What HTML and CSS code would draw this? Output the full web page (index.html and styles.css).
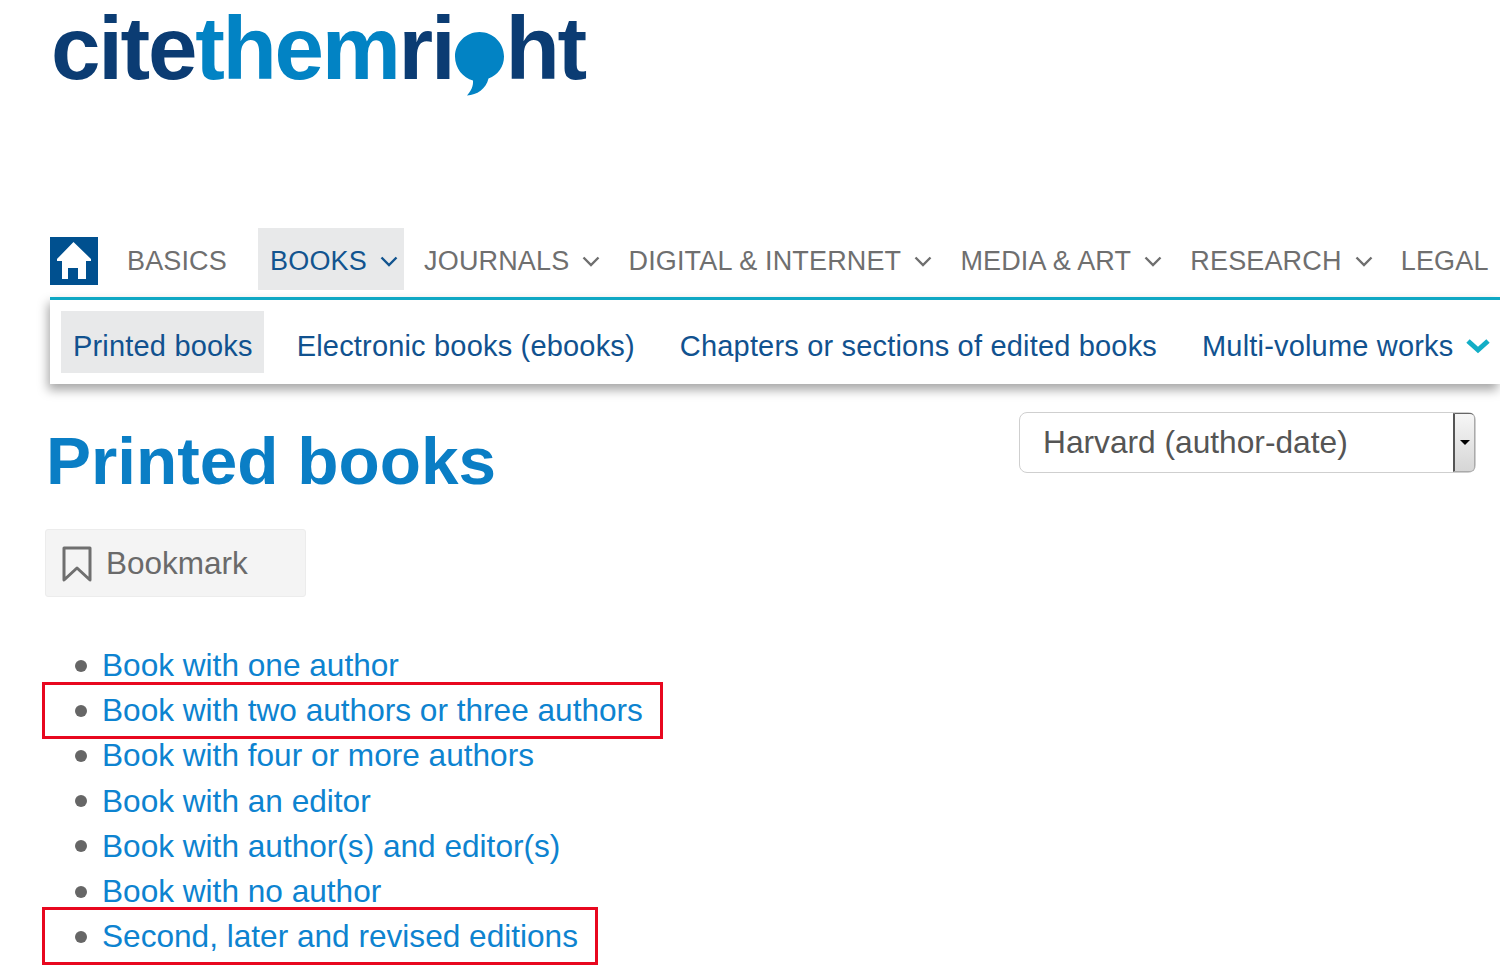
FILE: index.html
```html
<!DOCTYPE html>
<html lang="en">
<head>
<meta charset="utf-8">
<title>Printed books</title>
<link rel="stylesheet" href="styles.css">
</head>
<body>
<header class="brand">
  <a class="logo" href="#"><span class="dark">cite</span><span class="blue">them</span><span class="dark">ri</span><svg class="bubble" viewBox="0 0 49 64" aria-hidden="true"><path d="M24.5 0C11 0 0 11 0 24.5 0 36 8 46 18 48.5 18.5 54 16 59 12 63.5 22 63 31 57 33.5 46.5 43 43 49 34.5 49 24.5 49 11 38 0 24.5 0z"/></svg><span class="dark">ht</span></a>
</header>
<nav class="mainnav">
  <a class="home" href="#"><svg viewBox="0 0 48 48" aria-hidden="true"><path d="M23.5 5 7 22v2h5v18h6V31h10v11h8V24h5v-2z"/></svg></a>
  <a class="item first" href="#">BASICS</a>
  <a class="item active" href="#">BOOKS<svg class="chev" viewBox="0 0 18 12"><path d="M1.5 2.5l7.5 7.5 7.5-7.5"/></svg></a>
  <a class="item" href="#">JOURNALS<svg class="chev" viewBox="0 0 18 12"><path d="M1.5 2.5l7.5 7.5 7.5-7.5"/></svg></a>
  <a class="item" href="#">DIGITAL &amp; INTERNET<svg class="chev" viewBox="0 0 18 12"><path d="M1.5 2.5l7.5 7.5 7.5-7.5"/></svg></a>
  <a class="item" href="#">MEDIA &amp; ART<svg class="chev" viewBox="0 0 18 12"><path d="M1.5 2.5l7.5 7.5 7.5-7.5"/></svg></a>
  <a class="item" href="#">RESEARCH<svg class="chev" viewBox="0 0 18 12"><path d="M1.5 2.5l7.5 7.5 7.5-7.5"/></svg></a>
  <a class="item" href="#">LEGAL<svg class="chev" viewBox="0 0 18 12"><path d="M1.5 2.5l7.5 7.5 7.5-7.5"/></svg></a>
</nav>
<nav class="subnav">
  <a class="sub current" href="#">Printed books</a>
  <a class="sub" href="#">Electronic books (ebooks)</a>
  <a class="sub" href="#">Chapters or sections of edited books</a>
  <a class="sub" href="#">Multi-volume works<svg class="subchev" viewBox="0 0 26 16"><path d="M3 3l10 9 10-9"/></svg></a>
</nav>
<main class="content">
  <div class="titlerow">
    <h1>Printed books</h1>
    <div class="select"><span class="value">Harvard (author-date)</span><span class="spin"><i></i></span></div>
  </div>
  <a class="bookmark" href="#"><svg viewBox="0 0 30 36" aria-hidden="true"><path d="M2 2h26v32L15 22 2 34z"/></svg>Bookmark</a>
  <ul class="links">
    <li><a href="#">Book with one author</a></li>
    <li><a href="#">Book with two authors or three authors</a><span class="mark mark-a"></span></li>
    <li><a href="#">Book with four or more authors</a></li>
    <li><a href="#">Book with an editor</a></li>
    <li><a href="#">Book with author(s) and editor(s)</a></li>
    <li><a href="#">Book with no author</a></li>
    <li><a href="#">Second, later and revised editions</a><span class="mark mark-b"></span></li>
  </ul>
</main>
</body>
</html>
```

FILE: styles.css
```css
html, body {
  margin: 0;
  padding: 0;
  background: #fff;
}
body {
  width: 1500px;
  height: 978px;
  overflow: hidden;
  font-family: "Liberation Sans", Arial, sans-serif;
}
a { text-decoration: none; }

.brand {
  height: 228px;
  padding-left: 51px;
  box-sizing: border-box;
}
.logo {
  display: inline-flex;
  align-items: flex-start;
  padding-top: 2px;
  font-size: 89px;
  font-weight: 700;
  line-height: 92px;
  letter-spacing: -2.3px;
}
.logo .dark { color: #0b3c73; }
.logo .blue { color: #0283c4; }
.bubble {
  width: 49px;
  height: 64px;
  margin: 30px 1px 0 2px;
  flex: none;
  fill: #0283c4;
}

.mainnav {
  display: flex;
  align-items: center;
  height: 62px;
  margin-left: 50px;
  gap: 4.2px;
  white-space: nowrap;
}
.home {
  flex: none;
  width: 48px;
  height: 48px;
  margin-top: 4px;
  margin-right: 12.8px;
  background: #00508f;
}
.home svg {
  display: block;
  width: 48px;
  height: 48px;
  fill: #fff;
}
.item {
  display: flex;
  align-items: center;
  box-sizing: border-box;
  height: 62px;
  padding: 4px 12px 0;
  font-size: 27px;
  letter-spacing: 0.15px;
  color: #6f6f6f;
}
.item.first { margin-right: 15px; }
.item.active {
  background: #e8e9ea;
  color: #12548f;
  padding-right: 6px;
  margin-right: 4px;
}
.chev {
  flex: none;
  width: 18px;
  height: 12px;
  margin-left: 13px;
  fill: none;
  stroke: currentColor;
  stroke-width: 2.4;
}

.subnav {
  display: flex;
  align-items: center;
  height: 84px;
  margin: 7px 0 0 50px;
  padding-left: 11px;
  gap: 21px;
  border-top: 3px solid #0fa8c4;
  background: #fff;
  box-shadow: -2px 6px 10px rgba(0, 0, 0, 0.35);
  white-space: nowrap;
}
.sub {
  display: flex;
  align-items: center;
  box-sizing: border-box;
  height: 62px;
  padding: 8px 12px 0;
  font-size: 29px;
  letter-spacing: 0.18px;
  color: #11528f;
}
.sub.current {
  background: #e8e9ea;
  padding-right: 11px;
}
.subchev {
  flex: none;
  width: 26px;
  height: 16px;
  margin-left: 12px;
  fill: none;
  stroke: #13aec6;
  stroke-width: 5;
}

.content {
  padding: 28px 24px 0 45px;
}
.titlerow {
  display: flex;
  justify-content: space-between;
  align-items: flex-start;
}
h1 {
  margin: 9px 0 -1px 1px;
  font-size: 67.5px;
  line-height: 80px;
  font-weight: 700;
  color: #0a7ec5;
}
.select {
  display: flex;
  justify-content: space-between;
  box-sizing: border-box;
  width: 457px;
  height: 61px;
  border: 1px solid #cfcfcf;
  border-radius: 8px;
  font-size: 31.7px;
  line-height: 59px;
  color: #555;
}
.value { padding-left: 23px; }
.spin {
  display: flex;
  align-items: center;
  justify-content: center;
  box-sizing: border-box;
  width: 22px;
  border: 1px solid #aaa;
  border-left: 2px solid #555;
  border-top-color: #666;
  border-radius: 0 5px 5px 0;
  background: linear-gradient(#f6f6f6, #d6d6d6);
}
.spin i {
  width: 0;
  height: 0;
  border: 5px solid transparent;
  border-top: 5px solid #000;
  border-bottom: 0;
}
.bookmark {
  display: flex;
  align-items: center;
  gap: 14px;
  box-sizing: border-box;
  width: 261px;
  height: 68px;
  margin-top: 29px;
  padding: 1px 0 0 16px;
  background: #f4f4f4;
  border: 1px solid #ececec;
  border-radius: 3px;
  font-size: 31.5px;
  color: #6a6a6a;
}
.bookmark svg {
  flex: none;
  width: 30px;
  height: 36px;
  fill: none;
  stroke: #6f6f6f;
  stroke-width: 3;
  stroke-linejoin: round;
}
.links {
  margin: 46px 0 0;
  padding: 0 0 0 30px;
  list-style: none;
  font-size: 31.6px;
  line-height: 45.2px;
}
.links li {
  position: relative;
  display: flex;
  align-items: center;
  gap: 15px;
}
.links li::before {
  content: "";
  flex: none;
  width: 12px;
  height: 12px;
  border-radius: 50%;
  background: #666;
}
.links a { color: #0d83d0; }
.mark {
  position: absolute;
  left: -33px;
  box-sizing: border-box;
  border: 3px solid #e8071f;
  pointer-events: none;
}
.mark-a { top: -6px; width: 621px; height: 57px; }
.mark-b { top: -7px; width: 556px; height: 58px; }
```
